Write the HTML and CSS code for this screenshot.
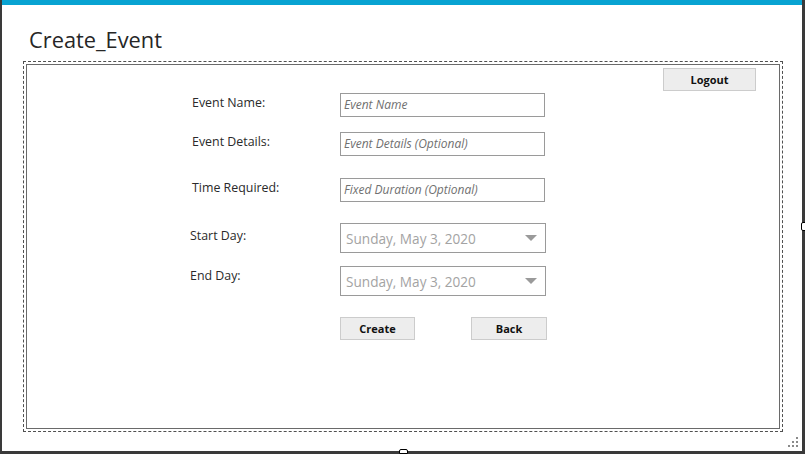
FILE: index.html
```html
<!DOCTYPE html>
<html>
<head>
<meta charset="utf-8">
<link rel="stylesheet" href="styles.css">
</head>
<body>
<div class="window">
  <div class="topbar"></div>
  <h1 class="title">Create_Event</h1>
  <div class="frame">
    <div class="panel">
      <div class="logout-row">
        <button class="btn logout">Logout</button>
      </div>
      <div class="form">
        <div class="row r1">
          <label class="lbl">Event Name:</label>
          <div class="input"><span class="ph">Event Name</span></div>
        </div>
        <div class="row r2">
          <label class="lbl">Event Details:</label>
          <div class="input"><span class="ph">Event Details (Optional)</span></div>
        </div>
        <div class="row r3">
          <label class="lbl">Time Required:</label>
          <div class="input"><span class="ph">Fixed Duration (Optional)</span></div>
        </div>
        <div class="row r4">
          <label class="lbl lbl-day lbl-start">Start Day:</label>
          <div class="picker"><span class="date">Sunday, May 3, 2020</span><span class="arrow"></span></div>
        </div>
        <div class="row r5">
          <label class="lbl lbl-day">End Day:</label>
          <div class="picker"><span class="date">Sunday, May 3, 2020</span><span class="arrow"></span></div>
        </div>
        <div class="actions">
          <button class="btn create">Create</button>
          <button class="btn back">Back</button>
        </div>
      </div>
    </div>
  </div>
  <div class="grip">
    <svg width="10" height="10" viewBox="0 0 10 10">
      <rect x="8" y="0" width="2" height="2" fill="#8a8a8a"/>
      <rect x="4" y="4" width="2" height="2" fill="#8a8a8a"/>
      <rect x="8" y="4" width="2" height="2" fill="#8a8a8a"/>
      <rect x="0" y="8" width="2" height="2" fill="#8a8a8a"/>
      <rect x="4" y="8" width="2" height="2" fill="#8a8a8a"/>
      <rect x="8" y="8" width="2" height="2" fill="#8a8a8a"/>
    </svg>
  </div>
  <div class="handle handle-right"></div>
  <div class="handle handle-bottom"></div>
</div>
</body>
</html>
```
FILE: styles.css
```css
html, body {
  margin: 0;
  padding: 0;
  background: #ffffff;
}
body {
  font-family: "Open Sans", "Noto Sans", sans-serif;
  color: #1e1e1e;
}
.window {
  position: relative;
  width: 805px;
  height: 454px;
  box-sizing: border-box;
  border-left: 2px solid #3a3a3a;
  border-right: 3px solid #3a3a3a;
  border-bottom: 3px solid #3a3a3a;
  background: #ffffff;
}
.topbar {
  height: 5px;
  background: #08a3d2;
}
.title {
  margin: 0;
  padding: 20px 0 0 27px;
  height: 36px;
  font-size: 21.8px;
  font-weight: 400;
  line-height: 30px;
  color: #262626;
}
.frame {
  margin-left: 21px;
  width: 760px;
  height: 371px;
  box-sizing: border-box;
  border: 1px dashed #505050;
  padding: 2px;
}
.panel {
  height: 100%;
  box-sizing: border-box;
  border: 1px solid #6a6a6a;
}
.logout-row {
  display: flex;
  justify-content: flex-end;
  padding: 3px 23px 0 0;
}
.btn {
  font-family: "Open Sans", "Noto Sans", sans-serif;
  font-size: 11px;
  font-weight: 700;
  color: #111;
  background: #ededed;
  border: 1px solid #cccccc;
  height: 23px;
  padding: 0;
  line-height: 20px;
}
.logout {
  width: 93px;
}
.form {
  display: flex;
  flex-direction: column;
  padding-left: 165px;
}
.row {
  display: flex;
  align-items: flex-start;
}
.r1 { margin-top: 2px; }
.r2 { margin-top: 15px; }
.r3 { margin-top: 22px; }
.r4 { margin-top: 21px; }
.r5 { margin-top: 13px; }
.lbl {
  width: 148px;
  font-size: 12.4px;
  line-height: 16px;
  padding-top: 2px;
  color: #2a2a2a;
}
.lbl-day {
  margin-left: -2px;
  width: 150px;
}
.lbl-start {
  padding-top: 5px;
}
.input {
  width: 205px;
  height: 24px;
  box-sizing: border-box;
  border: 1px solid #9a9a9a;
  display: flex;
  align-items: center;
  padding: 0 0 1px 3px;
}
.ph {
  font-size: 12px;
  font-style: italic;
  color: #707070;
}
.picker {
  width: 206px;
  height: 30px;
  box-sizing: border-box;
  border: 1px solid #9a9a9a;
  display: flex;
  align-items: center;
  justify-content: space-between;
  padding: 0 8px 0 5px;
}
.date {
  font-size: 13.6px;
  color: #a3a3a3;
}
.arrow {
  width: 0;
  height: 0;
  border-left: 6px solid transparent;
  border-right: 6px solid transparent;
  border-top: 6px solid #9a9a9a;
}
.actions {
  display: flex;
  gap: 56px;
  margin-top: 21px;
  margin-left: 148px;
}
.create {
  width: 75px;
}
.back {
  width: 76px;
}
.grip {
  position: absolute;
  right: 4px;
  bottom: 4px;
  width: 10px;
  height: 10px;
  line-height: 0;
}
.handle {
  position: absolute;
  background: #ffffff;
  border: 1px solid #000;
  box-sizing: border-box;
}
.handle-right {
  right: -5px;
  top: 222px;
  width: 6px;
  height: 9px;
  border-radius: 2px;
}
.handle-bottom {
  left: 397px;
  bottom: -3px;
  width: 9px;
  height: 5px;
  border-radius: 2px 2px 0 0;
}
```
